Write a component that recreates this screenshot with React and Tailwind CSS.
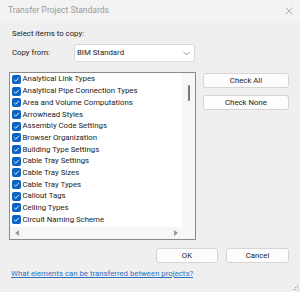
import React from 'react';

const items = [
  'Analytical Link Types',
  'Analytical Pipe Connection Types',
  'Area and Volume Computations',
  'Arrowhead Styles',
  'Assembly Code Settings',
  'Browser Organization',
  'Building Type Settings',
  'Cable Tray Settings',
  'Cable Tray Sizes',
  'Cable Tray Types',
  'Callout Tags',
  'Ceiling Types',
  'Circuit Naming Scheme',
];

const Check = () => (
  <span className="w-[9px] h-[9px] rounded-[2px] bg-[#0a63c2] flex items-center justify-center shrink-0">
    <svg width="7" height="7" viewBox="0 0 8 8">
      <path d="M1.3 4.2 L3.2 6 L6.8 2" fill="none" stroke="#fff" strokeWidth="1" />
    </svg>
  </span>
);

const Btn = ({ children, className }) => (
  <button className={`h-[15px] bg-[#fdfdfd] border border-[#d4d4d4] rounded-[3px] text-[7.8px] text-[#1b1b1b] leading-none ${className}`}>
    {children}
  </button>
);

const App = () => {
  return (
    <div className="w-[300px] h-[292px] bg-[#efefef] text-[#1b1b1b] overflow-hidden relative" style={{ fontFamily: 'Roboto, "Noto Sans", sans-serif' }}>
      {/* Barra de título */}
      <div className="h-[21px] bg-[#f3f3f3] flex items-center justify-between pl-[8px] pr-[7px]">
        <span className="text-[8.5px] text-[#9a9a9a] leading-none">Transfer Project Standards</span>
        <svg width="8" height="8" viewBox="0 0 8 8">
          <path d="M0.5 0.5 L7.5 7.5 M7.5 0.5 L0.5 7.5" stroke="#a8a8a8" strokeWidth="0.9" />
        </svg>
      </div>

      <div className="h-[12px] mt-[7px] pl-[12px] flex items-center text-[7.8px] leading-none">Select items to copy:</div>

      <div className="flex items-center mt-[4px] pl-[12px] pr-[105px]">
        <span className="text-[7.8px] leading-none w-[62px]">Copy from:</span>
        <div className="flex-1 h-[18px] bg-white border border-[#d9d9d9] rounded-[3px] flex items-center justify-between pl-[2px] pr-[4px]">
          <span className="text-[7.8px] leading-none">BIM Standard</span>
          <svg width="7" height="5" viewBox="0 0 7 5">
            <path d="M0.5 1 L3.5 4 L6.5 1" fill="none" stroke="#7a7a7a" strokeWidth="0.8" />
          </svg>
        </div>
      </div>

      <div className="flex mt-[10px] pl-[9px]">
        {/* Lista */}
        <div className="w-[187px] h-[168px] bg-white border border-[#8a8a8a] flex flex-col">
          <div className="flex flex-1 min-h-0">
            <div className="flex-1 pt-[0.5px] pl-[2px] overflow-hidden">
              {items.map((item) => (
                <div key={item} className="h-[11.7px] flex items-center gap-[1.5px]">
                  <Check />
                  <span className="text-[7.8px] leading-none whitespace-nowrap">{item}</span>
                </div>
              ))}
            </div>
            <div className="w-[13px] bg-[#f6f6f6] flex justify-center pt-[12px]">
              <div className="w-[2px] h-[16px] bg-[#777] rounded-full" />
            </div>
          </div>
          <div className="h-[12px] bg-[#f6f6f6] flex items-center justify-between pl-[5px] pr-[17px]">
            <svg width="4" height="6" viewBox="0 0 4 6"><path d="M4 0 L0 3 L4 6 Z" fill="#9a9a9a" /></svg>
            <svg width="4" height="6" viewBox="0 0 4 6"><path d="M0 0 L4 3 L0 6 Z" fill="#9a9a9a" /></svg>
          </div>
        </div>

        {/* Botones laterales */}
        <div className="flex flex-col gap-[7px] ml-[7px] mt-[1px] w-[86px]">
          <Btn className="w-full">Check All</Btn>
          <Btn className="w-full">Check None</Btn>
        </div>
      </div>

      <div className="flex justify-end gap-[8px] mt-[8px] pr-[11px]">
        <Btn className="w-[62px]">OK</Btn>
        <Btn className="w-[63px]">Cancel</Btn>
      </div>

      <div className="h-[12px] mt-[5px] pl-[11px] flex items-center">
        <a className="text-[7.8px] leading-none text-[#2f6fc0] underline">What elements can be transferred between projects?</a>
      </div>

      <svg className="absolute right-[1px] bottom-[1px]" width="7" height="7" viewBox="0 0 7 7">
        <rect x="5" y="1" width="1" height="1" fill="#a0a0a0" />
        <rect x="3" y="3" width="1" height="1" fill="#a0a0a0" />
        <rect x="5" y="3" width="1" height="1" fill="#a0a0a0" />
        <rect x="1" y="5" width="1" height="1" fill="#a0a0a0" />
        <rect x="3" y="5" width="1" height="1" fill="#a0a0a0" />
        <rect x="5" y="5" width="1" height="1" fill="#a0a0a0" />
      </svg>
    </div>
  );
};

export default App;
